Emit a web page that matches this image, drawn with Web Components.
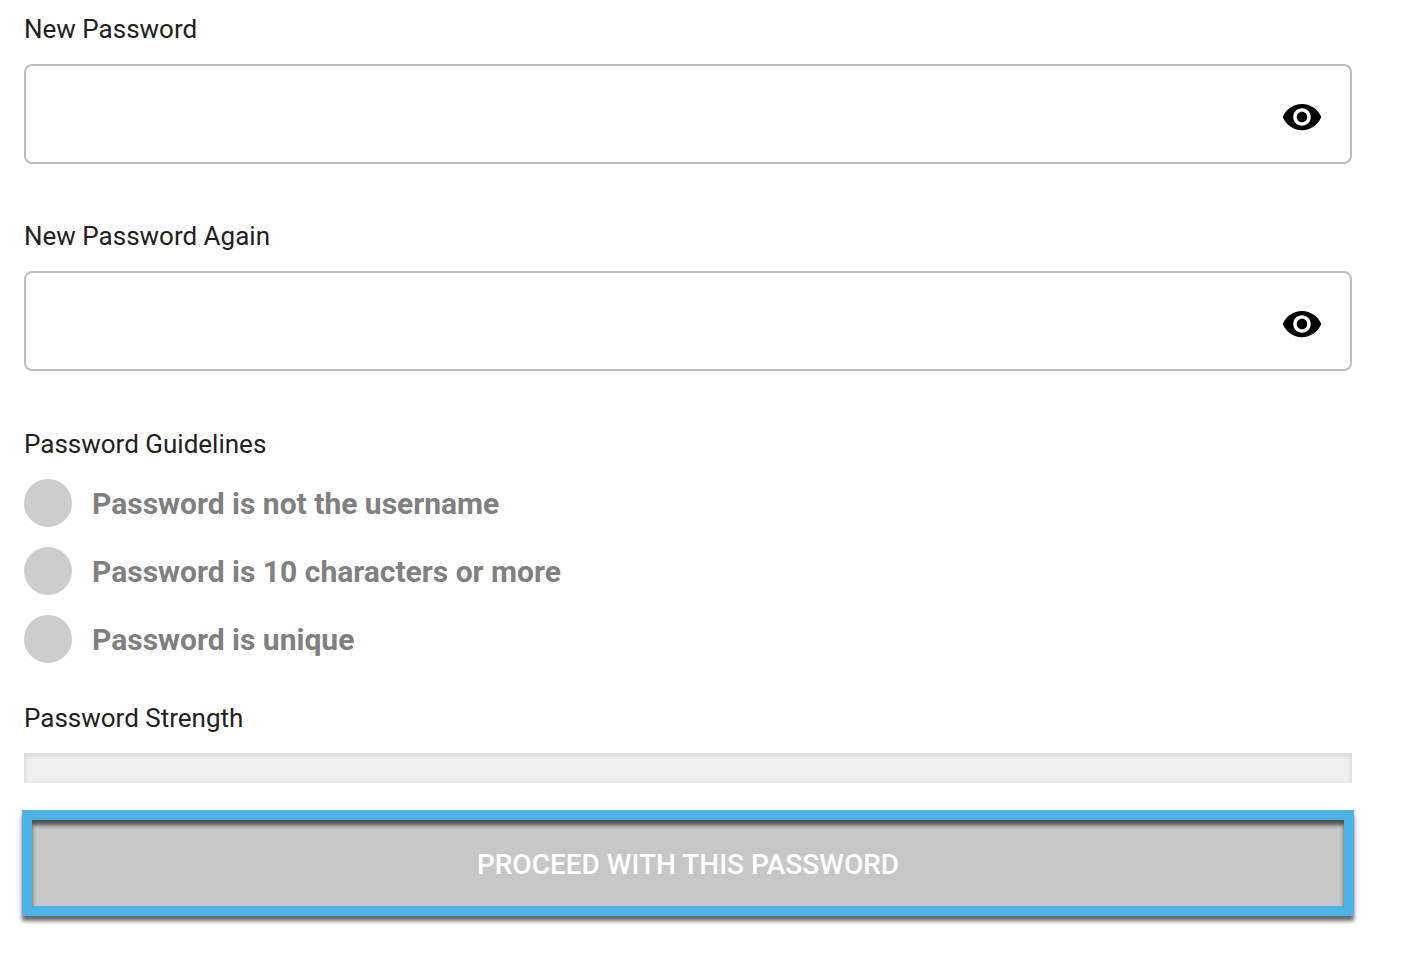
<!DOCTYPE html>
<html lang="en">
<head>
<meta charset="utf-8">
<meta name="viewport" content="width=device-width, initial-scale=1">
<title>New Password</title>
<style>
  body { margin: 0; background: #fff; color: #212121; font: 26px/30px Roboto, "Liberation Sans", sans-serif; }
</style>
</head>
<body>
<password-form></password-form>

<script>
  const define = (name, html, setup) => {
    const template = document.createElement('template');
    template.innerHTML = html;
    customElements.define(name, class extends HTMLElement {
      constructor() {
        super();
        this.attachShadow({ mode: 'open' }).append(template.content.cloneNode(true));
      }
      connectedCallback() { if (setup) setup(this.shadowRoot, this); }
    });
  };

  define('password-field', `
    <style>
      :host { display: block; }
      label { display: block; margin-bottom: 20px; }
      .box { display: flex; align-items: center; box-sizing: border-box; height: 100px;
             border: 2px solid #bdbdbd; border-radius: 8px; background: #fff; }
      input { flex: 1; min-width: 0; height: 100%; box-sizing: border-box; padding: 0 24px;
              border: 0; outline: 0; background: none; color: inherit; font: inherit; }
      button { display: flex; padding: 6px 27px 0 0; border: 0; background: none; color: #000; cursor: pointer; }
      svg { width: 42px; height: 42px; fill: currentColor; }
    </style>
    <label for="password"><slot></slot></label>
    <div class="box">
      <input id="password" type="password" autocomplete="new-password">
      <button type="button" aria-label="Show password">
        <svg viewBox="0 0 24 24" aria-hidden="true"><path d="M12 4.5C7 4.5 2.73 7.61 1 12c1.73 4.39 6 7.5 11 7.5s9.27-3.11 11-7.5c-1.73-4.39-6-7.5-11-7.5zM12 17c-2.76 0-5-2.24-5-5s2.24-5 5-5 5 2.24 5 5-2.24 5-5 5zm0-8c-1.66 0-3 1.34-3 3s1.34 3 3 3 3-1.34 3-3-1.34-3-3-3z"/></svg>
      </button>
    </div>`, root => {
      const input = root.querySelector('input');
      root.querySelector('button').onclick = () => {
        input.type = input.type === 'password' ? 'text' : 'password';
      };
    });

  define('guideline-item', `
    <style>
      :host { display: flex; align-items: center; gap: 20px; color: #808080; font-size: 30px; line-height: 32px; font-weight: 700; }
      .dot { flex: none; width: 48px; height: 48px; border-radius: 50%; background: #cdcdcd; }
      .text { padding-top: 2px; }
    </style>
    <span class="dot"></span><span class="text"><slot></slot></span>`);

  define('form-section', `
    <style>
      :host { display: block; }
      h2 { margin: 0 0 20px; font: inherit; }
      .content { display: grid; gap: 20px; }
    </style>
    <h2><slot name="title"></slot></h2>
    <div class="content"><slot></slot></div>`);

  define('strength-bar', `
    <style>
      :host { display: block; height: 30px; background: #f0f0f0;
              box-shadow: inset 0 2px 6px rgba(0, 0, 0, .13); }
    </style>`);

  define('proceed-button', `
    <style>
      :host { display: block; }
      button { display: block; box-sizing: border-box; width: 100%; height: 106px; padding: 4px 0 0;
               border: 10px solid #4db3e6; border-radius: 0; background: #c7c7c7; color: #fff;
               font: 500 28px/32px Roboto, "Liberation Sans", sans-serif; text-transform: uppercase;
               box-shadow: 0 5px 4px rgba(0, 0, 0, .6), inset 0 5px 4px rgba(0, 0, 0, .62); }
    </style>
    <button type="submit"><slot></slot></button>`);

  define('password-form', `
    <style>
      :host { display: block; padding: 14px 60px 40px 24px; }
      form { display: flex; flex-direction: column; }
      .again { margin-top: 57px; }
      .guidelines { margin-top: 58px; }
      .strength { margin-top: 40px; }
      proceed-button { margin: 27px -2px 0; }
    </style>
    <form onsubmit="return false">
      <password-field>New Password</password-field>
      <password-field class="again">New Password Again</password-field>
      <form-section class="guidelines">
        <span slot="title">Password Guidelines</span>
        <guideline-item>Password is not the username</guideline-item>
        <guideline-item>Password is 10 characters or more</guideline-item>
        <guideline-item>Password is unique</guideline-item>
      </form-section>
      <form-section class="strength">
        <span slot="title">Password Strength</span>
        <strength-bar role="meter" aria-label="Password Strength" aria-valuemin="0" aria-valuemax="4" aria-valuenow="0"></strength-bar>
      </form-section>
      <proceed-button>Proceed with this password</proceed-button>
    </form>`);
</script>
</body>
</html>
